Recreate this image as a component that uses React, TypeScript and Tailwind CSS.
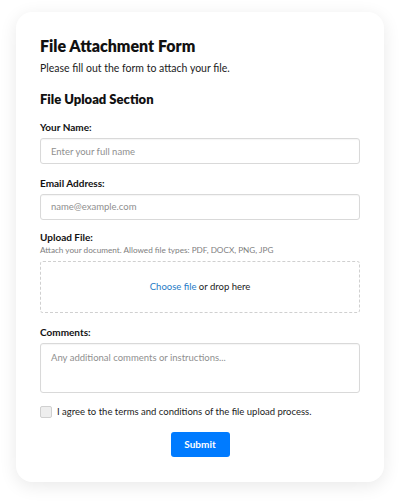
import { useState } from 'react';

const font = { fontFamily: 'Lato, "Noto Sans", sans-serif' };

function Field({ label, children }: { label: string; children: React.ReactNode }) {
  return (
    <div className="flex flex-col">
      <label className="text-[10px] leading-4 font-bold text-[#111] mb-[3px]">{label}</label>
      {children}
    </div>
  );
}

export default function App() {
  const [agree, setAgree] = useState(false);

  return (
    <div className="min-h-[501px] bg-white px-4 pt-3 pb-5" style={font}>
      <div className="rounded-2xl bg-white px-6 pt-6 pb-[25px] shadow-[0_4px_18px_rgba(0,0,0,0.09)]">
        <h1 className="text-[16px] leading-5 font-extrabold text-[#111]">File Attachment Form</h1>
        <p className="mt-[3px] text-[10.5px] leading-[18px] text-[#1c1c1c]">
          Please fill out the form to attach your file.
        </p>

        <h2 className="mt-3 text-[13px] leading-5 font-extrabold text-[#111]">File Upload Section</h2>

        <form className="mt-[10px] flex flex-col gap-[10.5px]" onSubmit={(e) => e.preventDefault()}>
          <Field label="Your Name:">
            <input
              type="text"
              placeholder="Enter your full name"
              className="h-[26px] rounded-[3px] border border-[#d9d9d9] px-[10px] text-[9.5px] text-[#333] placeholder:text-[#8f8f8f] shadow-[inset_0_1px_1px_rgba(0,0,0,0.04)] outline-none"
            />
          </Field>

          <Field label="Email Address:">
            <input
              type="email"
              placeholder="name@example.com"
              className="h-[26px] rounded-[3px] border border-[#d9d9d9] px-[10px] text-[9.5px] text-[#333] placeholder:text-[#8f8f8f] shadow-[inset_0_1px_1px_rgba(0,0,0,0.04)] outline-none"
            />
          </Field>

          <div className="flex flex-col">
            <label className="text-[10px] leading-[14px] font-bold text-[#111]">Upload File:</label>
            <span className="text-[8.2px] leading-3 text-[#808080]">
              Attach your document. Allowed file types: PDF, DOCX, PNG, JPG
            </span>
            <div className="mt-[5px] flex h-[52px] items-center justify-center rounded-[3px] border border-dashed border-[#d0d0d0] text-[9.5px] text-[#1c1c1c]">
              <span className="text-[#1f7bc6]">Choose file</span>
              <span>&nbsp;or drop here</span>
            </div>
          </div>

          <Field label="Comments:">
            <textarea
              placeholder="Any additional comments or instructions..."
              className="h-[50px] resize-none rounded-[3px] border border-[#d9d9d9] px-[10px] py-[6px] text-[9.5px] leading-4 text-[#333] placeholder:text-[#8f8f8f] shadow-[inset_0_1px_1px_rgba(0,0,0,0.04)] outline-none"
            />
          </Field>

          <label className="mt-[1px] flex items-center gap-[5px] text-[9.5px] leading-4 text-[#1c1c1c]">
            <input
              type="checkbox"
              checked={agree}
              onChange={(e) => setAgree(e.target.checked)}
              className="h-3 w-3 appearance-none rounded-[2px] border border-[#d0d0d0] bg-[#eeeeee] checked:bg-[#007bff]"
            />
            I agree to the terms and conditions of the file upload process.
          </label>

          <div className="mt-[1px] flex justify-center">
            <button
              type="submit"
              className="h-[25px] w-[59px] rounded-[3px] bg-[#007bff] text-[10px] font-bold text-white"
            >
              Submit
            </button>
          </div>
        </form>
      </div>
    </div>
  );
}
